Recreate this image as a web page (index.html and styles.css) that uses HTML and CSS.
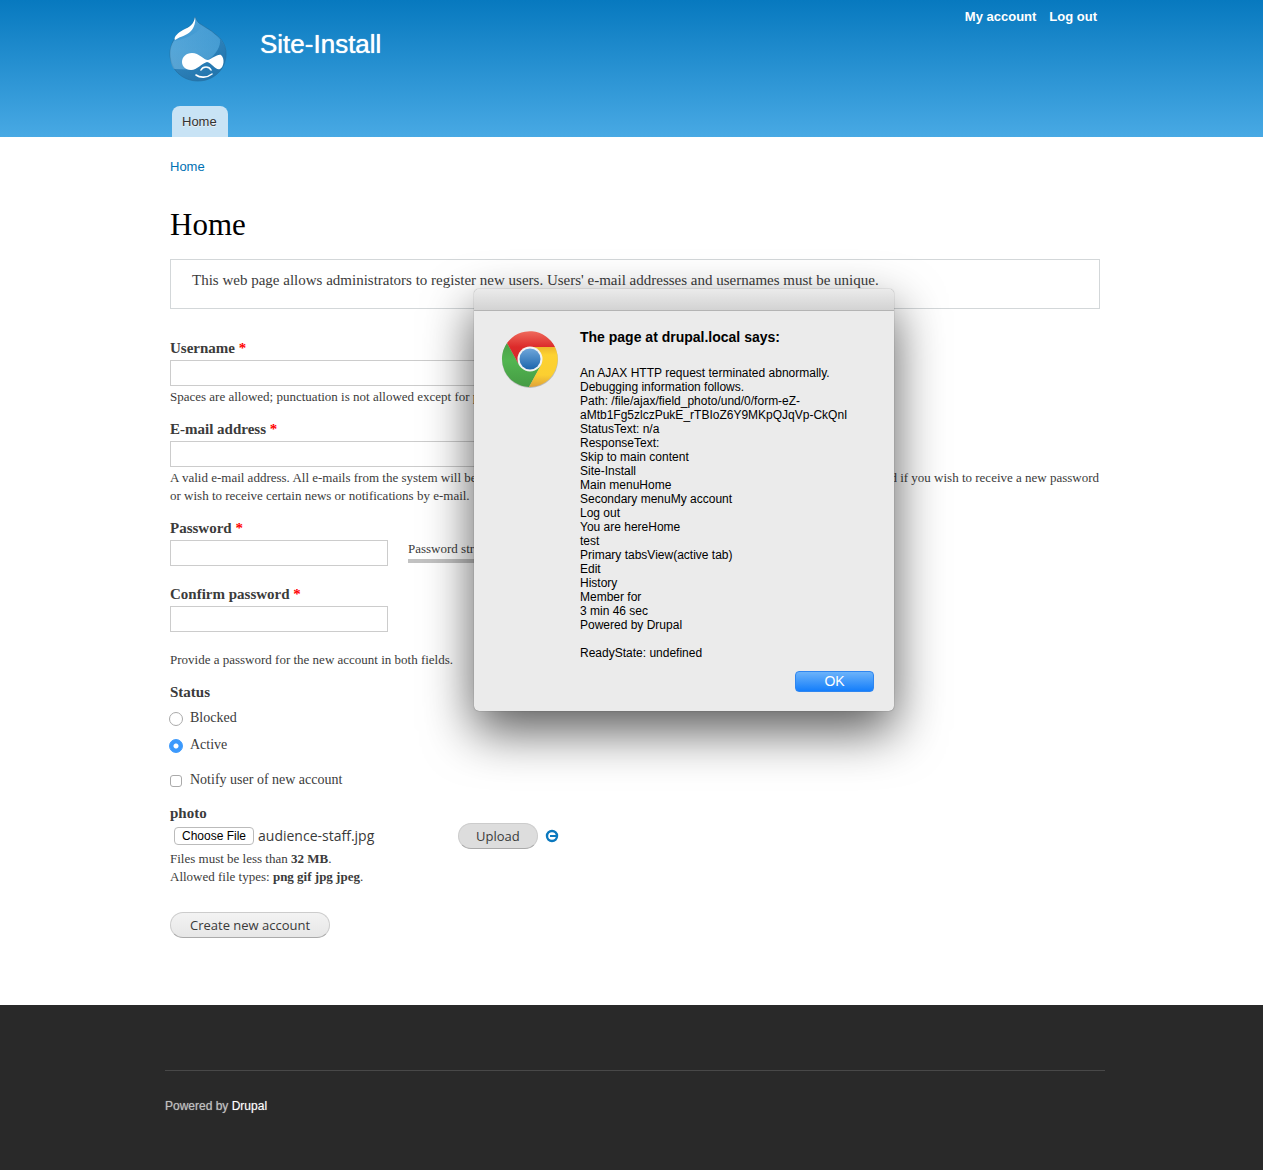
FILE: index.html
```html
<!DOCTYPE html>
<html lang="en">
<head>
    <meta charset="UTF-8">
    <meta name="viewport" content="width=device-width, initial-scale=1.0">
    <title>Home | Site-Install</title>
    <link rel="stylesheet" href="styles.css">
</head>
<body>
    <header class="site-header">
        <div class="section header-section">
            <div class="branding">
                <a href="#" class="logo" aria-label="Home page">
                    <svg width="58" height="66" viewBox="0 0 58 66">
                        <defs>
                            <linearGradient id="drop" x1="0" y1="0" x2="0" y2="1">
                                <stop offset="0" stop-color="#4a9fd6"/>
                                <stop offset="0.5" stop-color="#3f98d0"/>
                                <stop offset="1" stop-color="#3284bb"/>
                            </linearGradient>
                            <linearGradient id="shade" x1="0" y1="0.4" x2="1" y2="0.8">
                                <stop offset="0" stop-color="#1b6da6" stop-opacity="0.3"/>
                                <stop offset="1" stop-color="#1b6da6" stop-opacity="0.75"/>
                            </linearGradient>
                            <linearGradient id="glow" x1="0.8" y1="0" x2="0" y2="1">
                                <stop offset="0" stop-color="#8fcbee" stop-opacity="0"/>
                                <stop offset="1" stop-color="#8fcbee" stop-opacity="0.4"/>
                            </linearGradient>
                        </defs>
                        <path d="M26 1C28 5 29 7 33 9C37 12 42 14 46 18C53 23 57 29 57 38C57 54 44 65 29 65C13 65 1 53 1 38C1 28 6 20 13 15C20 11 25 8 26 1Z" fill="url(#drop)" stroke="#24658f" stroke-opacity="0.5"/>
                        <path d="M51 23C55 28 57 32 57 38C57 54 44 65 29 65C19 65 10 60 5 53C12 54 18 54 24 54L40 44C47 38 52 30 51 23Z" fill="url(#shade)"/>
                        <path d="M1 36C1 44 2 49 5 53H17C12 49 12 43 16 40C22 36 29 37 38 44C47 38 53 30 50 23C46 18 38 13 33 10C27 20 14 23 5 25C2 29 1 32 1 36Z" fill="url(#glow)"/>
                        <path d="M26 1C27 6 25 12 22 15C17 20 12 20 6 24C4 21 10 16 14 14C21 11 25 8 26 1Z" fill="#fff"/>
                        <path d="M23 37C30 37 35 44 39 44C43 43 48 38 52 39C56 42 55 51 51 53C47 55 43 47 38 46C33 47 28 54 22 54C16 54 13 50 13 46C13 41 17 37 23 37Z" fill="#fff"/>
                        <path d="M32 54C34 50 40 50 42 54M27 59C31 62 38 62 43 58" fill="none" stroke="#fff" stroke-width="1.6" stroke-linecap="round"/>
                    </svg>
                </a>
                <a href="#" class="site-name">Site-Install</a>
                <nav class="secondary-menu">
                    <a href="#">My account</a>
                    <a href="#">Log out</a>
                </nav>
            </div>
            <nav class="main-menu">
                <a href="#" class="active">Home</a>
            </nav>
        </div>
    </header>

    <main class="section content">
        <nav class="breadcrumb"><a href="#">Home</a></nav>
        <h1>Home</h1>
        <div class="help">This web page allows administrators to register new users. Users' e-mail addresses and usernames must be unique.</div>

        <form class="register-form">
            <div class="form-item">
                <label class="title" for="name">Username <span class="required">*</span></label>
                <input type="text" class="form-text" id="name">
                <div class="description">Spaces are allowed; punctuation is not allowed except for periods, hyphens, apostrophes, and underscores.</div>
            </div>
            <div class="form-item">
                <label class="title" for="mail">E-mail address <span class="required">*</span></label>
                <input type="text" class="form-text" id="mail">
                <div class="description">A valid e-mail address. All e-mails from the system will be sent to this address. The e-mail address is not made public and will only be used if you wish to receive a new password or wish to receive certain news or notifications by e-mail.</div>
            </div>
            <div class="form-item passwords">
                <label class="title" for="pass1">Password <span class="required">*</span></label>
                <div class="password-row">
                    <input type="password" class="form-text" id="pass1">
                    <div class="strength">
                        <div class="description">Password strength:</div>
                        <div class="strength-bar"></div>
                    </div>
                </div>
                <label class="title confirm" for="pass2">Confirm password <span class="required">*</span></label>
                <input type="password" class="form-text" id="pass2">
                <div class="description">Provide a password for the new account in both fields.</div>
            </div>
            <fieldset class="form-item">
                <legend class="title">Status</legend>
                <div class="option">
                    <input type="radio" name="status" id="blocked">
                    <label for="blocked">Blocked</label>
                </div>
                <div class="option">
                    <input type="radio" name="status" id="active" checked>
                    <label for="active">Active</label>
                </div>
            </fieldset>
            <div class="option notify">
                <input type="checkbox" id="notify">
                <label for="notify">Notify user of new account</label>
            </div>
            <div class="form-item photo">
                <div class="title">photo</div>
                <div class="file-row">
                    <div class="file-field">
                        <input type="file" class="file-input" id="photo">
                        <label class="choose-file" for="photo">Choose File</label>
                        <span class="file-name">audience-staff.jpg</span>
                    </div>
                    <button type="button" class="form-submit pressed">Upload</button>
                    <svg class="throbber" width="14" height="14" viewBox="0 0 14 14">
                        <circle cx="7" cy="7" r="5" fill="#fff" stroke="#0a78be" stroke-width="2.4"/>
                        <path d="M5 7H12" stroke="#0a78be" stroke-width="2"/>
                    </svg>
                </div>
                <div class="description">Files must be less than <strong>32 MB</strong>.<br>Allowed file types: <strong>png gif jpg jpeg</strong>.</div>
            </div>
            <button type="button" class="form-submit create">Create new account</button>
        </form>
    </main>

    <footer class="site-footer">
        <div class="section footer-section">
            <div class="powered">Powered by <a href="#">Drupal</a></div>
        </div>
    </footer>

    <dialog class="alert" open>
        <div class="alert-bar"></div>
        <div class="alert-body">
            <svg class="chrome-icon" width="58" height="58" viewBox="0 0 58 58">
                <defs>
                    <linearGradient id="red" x1="0" y1="0" x2="0" y2="1">
                        <stop offset="0" stop-color="#ef6a5c"/>
                        <stop offset="0.5" stop-color="#dc2a2a"/>
                        <stop offset="1" stop-color="#d8262b"/>
                    </linearGradient>
                    <linearGradient id="blue" x1="0" y1="0" x2="0" y2="1">
                        <stop offset="0" stop-color="#6fa6da"/>
                        <stop offset="1" stop-color="#1c65ac"/>
                    </linearGradient>
                    <linearGradient id="yellow" x1="0" y1="0" x2="0" y2="1">
                        <stop offset="0" stop-color="#edb62c"/>
                        <stop offset="0.2" stop-color="#fdd231"/>
                        <stop offset="0.7" stop-color="#fbcf31"/>
                        <stop offset="1" stop-color="#dfa23a"/>
                    </linearGradient>
                    <linearGradient id="green" x1="0" y1="0" x2="0" y2="1">
                        <stop offset="0" stop-color="#4aa047"/>
                        <stop offset="0.4" stop-color="#52b550"/>
                        <stop offset="1" stop-color="#459b44"/>
                    </linearGradient>
                </defs>
                <circle cx="29" cy="30" r="28" fill="#999" opacity="0.6"/>
                <path d="M29 29L17 33L6 13A28 28 0 0 0 28 57L40 35Z" fill="url(#green)"/>
                <path d="M29 29V17H54A28 28 0 0 1 28 57L40 35Z" fill="url(#yellow)"/>
                <path d="M29 29L17 33L6 13A28 28 0 0 1 54 17H29Z" fill="url(#red)"/>
                <circle cx="29" cy="29" r="12.5" fill="#f3f3f3"/>
                <circle cx="29" cy="29" r="10.5" fill="url(#blue)"/>
            </svg>
            <div class="alert-text">
                <h2>The page at drupal.local says:</h2>
                <p>An AJAX HTTP request terminated abnormally.<br>
                Debugging information follows.<br>
                Path: /file/ajax/field_photo/und/0/form-eZ-<br>
                aMtb1Fg5zlczPukE_rTBIoZ6Y9MKpQJqVp-CkQnI<br>
                StatusText: n/a<br>
                ResponseText:<br>
                Skip to main content<br>
                Site-Install<br>
                Main menuHome<br>
                Secondary menuMy account<br>
                Log out<br>
                You are hereHome<br>
                test<br>
                Primary tabsView(active tab)<br>
                Edit<br>
                History<br>
                Member for<br>
                3 min 46 sec<br>
                Powered by Drupal</p>
                <p>ReadyState: undefined</p>
            </div>
        </div>
        <div class="alert-actions">
            <button type="button" class="ok">OK</button>
        </div>
    </dialog>
</body>
</html>
```
FILE: styles.css
```css
* {
    box-sizing: border-box;
}
body {
    margin: 0;
    min-height: 100vh;
    display: flex;
    flex-direction: column;
    position: relative;
    font-family: Georgia, "Liberation Serif", serif;
    font-size: 15px;
    line-height: 22px;
    color: #3b3b3b;
    background-color: #fff;
}
a {
    color: #0071b3;
    text-decoration: none;
}
.section {
    width: 100%;
    max-width: 963px;
    margin: 0 auto;
}

/* header */
.site-header {
    font-family: "Liberation Sans", Arial, sans-serif;
    font-size: 13px;
    background: linear-gradient(#0779bf, #48a9e4);
}
.header-section {
    padding: 0 16px 0 19px;
}
.branding {
    display: flex;
    height: 106px;
}
.logo {
    padding-top: 16px;
}
.site-name {
    margin-left: 33px;
    padding-top: 29px;
    font-size: 26px;
    line-height: 30px;
    color: #fff;
    text-shadow: 0 0 1px #fff;
}
.secondary-menu {
    display: flex;
    gap: 13px;
    margin-left: auto;
    padding-top: 6px;
    font-weight: bold;
}
.secondary-menu a {
    color: #fff;
}
.main-menu {
    display: flex;
    padding-left: 3px;
}
.main-menu a {
    padding: 5px 11px 4px 10px;
    border-radius: 8px 8px 0 0;
    background-color: #c8e3f5;
    color: #333;
    text-shadow: 0 1px #eee;
}

/* content */
.content {
    flex: 1;
    padding: 21px 13px 67px 20px;
}
.breadcrumb {
    font-family: "Liberation Sans", Arial, sans-serif;
    font-size: 13px;
    line-height: 18px;
}
h1 {
    margin: 34px 0 19px;
    font-size: 31px;
    font-weight: normal;
    line-height: 30px;
    color: #000;
}
.help {
    padding: 9px 21px 17px;
    border: 1px solid #d3d7d9;
}
.register-form {
    margin-top: 28px;
}
.form-item {
    margin: 0 0 12px;
    padding: 0;
    border: 0;
}
.title {
    display: block;
    margin-bottom: 1px;
    padding: 0;
    font-weight: bold;
}
.required {
    color: #f00;
}
.form-text {
    display: block;
    width: 218px;
    height: 26px;
    padding: 2px;
    border: 1px solid #ccc;
    background-color: #fff;
}
#name,
#mail {
    width: 480px;
}
.description {
    padding-top: 2px;
    font-size: 13px;
    line-height: 18px;
}
.password-row {
    display: flex;
    gap: 20px;
}
.strength {
    width: 250px;
}
.strength .description {
    padding-top: 0;
}
.strength-bar {
    height: 4px;
    margin-top: 1px;
    background-color: #c2c2c2;
}
.confirm {
    margin-top: 17px;
}
.passwords > .description {
    padding-top: 19px;
}
legend.title {
    margin-bottom: -1px;
}
.option {
    display: flex;
    align-items: center;
    gap: 7px;
    margin-top: 5px;
    font-size: 14px;
}
.option input {
    appearance: none;
    width: 12px;
    height: 12px;
    margin: 2px 1px 0 0;
    border: 1px solid #aaa;
    border-radius: 3px;
    background-color: #fff;
}
.option input[type="radio"] {
    width: 14px;
    height: 14px;
    margin: 2px 0 0 -1px;
    border-radius: 50%;
}
.option input[type="radio"]:checked {
    border-color: #3b99fc;
    background: radial-gradient(#fff 2px, #3b99fc 3px);
}
.notify {
    margin: 13px 0 11px;
}
.photo .title {
    margin-bottom: -1px;
}
.photo .description {
    padding-top: 1px;
}
.file-row {
    display: flex;
    align-items: center;
}
.file-field {
    display: flex;
    align-items: center;
    gap: 4px;
    position: relative;
    width: 288px;
    padding-left: 4px;
}
.file-input {
    position: absolute;
    width: 1px;
    height: 1px;
    opacity: 0;
}
.choose-file {
    padding: 0 7px;
    border: 1px solid #bbb;
    border-radius: 4px;
    font-family: "Liberation Sans", Arial, sans-serif;
    font-size: 12px;
    line-height: 16px;
    color: #000;
    background-color: #fff;
}
.file-name,
.form-submit {
    font-family: "Lucida Grande", "Open Sans", sans-serif;
    font-size: 13px;
    color: #3a3a3a;
}
.file-name {
    font-size: 14px;
}
.form-submit {
    height: 26px;
    padding: 0 17px;
    border: 1px solid #ccc;
    border-bottom-color: #aaa;
    border-radius: 13px;
    background: linear-gradient(#f3f3f3, #e7e7e7);
    cursor: pointer;
}
.form-submit.pressed {
    background: #ddd;
}
.throbber {
    margin-left: 7px;
}
.form-submit.create {
    margin-top: 14px;
    padding: 0 19px;
}

/* footer */
.site-footer {
    font-family: "Liberation Sans", Arial, sans-serif;
    font-size: 12px;
    color: #c0c0c0;
    background-color: #292929;
}
.footer-section {
    padding: 65px 8px 53px 15px;
}
.powered {
    padding-top: 24px;
    border-top: 1px solid #484848;
    text-shadow: 0 0 1px #888;
}
.powered a {
    color: #fff;
}

/* alert window */
.alert {
    position: absolute;
    top: 289px;
    left: 474px;
    width: 420px;
    margin: 0;
    padding: 0;
    border: 0;
    border-radius: 5px;
    font-family: "Liberation Sans", Arial, sans-serif;
    color: #000;
    background-color: #ebebeb;
    box-shadow: 0 0 1px rgba(0, 0, 0, 0.6), 0 20px 50px rgba(0, 0, 0, 0.65);
}
.alert-bar {
    height: 22px;
    border-bottom: 1px solid #b4b4b4;
    border-radius: 5px 5px 0 0;
    background: linear-gradient(#ebebeb, #d3d3d3);
}
.alert-body {
    display: flex;
    gap: 21px;
    padding: 17px 20px 0 27px;
}
.chrome-icon {
    margin-top: 2px;
}
.alert-text {
    font-size: 12px;
    line-height: 14px;
}
.alert-text h2 {
    margin: 0 0 20px;
    font-size: 14px;
    line-height: 18px;
}
.alert-text p {
    margin: 0 0 14px;
    white-space: nowrap;
}
.alert-text p:last-child {
    margin-bottom: 11px;
}
.alert-actions {
    display: flex;
    justify-content: flex-end;
    padding: 0 20px 19px;
}
.ok {
    width: 79px;
    height: 21px;
    padding: 0;
    border: 1px solid #2f86f0;
    border-radius: 4px;
    font-family: inherit;
    font-size: 14px;
    line-height: 19px;
    color: #fff;
    background: linear-gradient(#6cb3fa, #147efb);
}
```
